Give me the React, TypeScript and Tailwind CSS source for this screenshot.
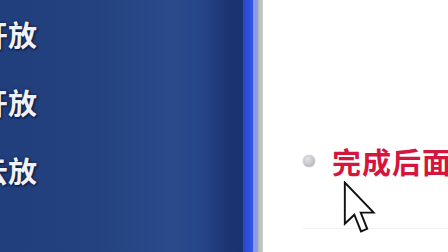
import React from 'react';

const rows = [
  { pre: '开', ch: '放' },
  { pre: '开', ch: '放' },
  { pre: '云', ch: '放' },
];

function Cursor() {
  // enlarged arrow pointer
  return (
    <svg width="34" height="54" viewBox="0 0 13 21" className="absolute left-[343px] top-[181px]">
      <path
        d="M0.6 0.6 L0.6 16.6 L4.3 13.1 L6.9 19.6 L9.3 18.6 L6.8 12.3 L11.8 12.3 Z"
        fill="#ffffff"
        stroke="#111111"
        strokeWidth="0.75"
        strokeLinejoin="miter"
      />
    </svg>
  );
}

export default function App() {
  return (
    <div className="relative flex h-[252px] w-[448px] overflow-hidden bg-white [font-family:'Noto_Sans_CJK_SC',sans-serif]">
      {/* blue side panel */}
      <div className="flex w-[243px] shrink-0 flex-col bg-[linear-gradient(to_right,#213e7d_0%,#24427f_40%,#2a4a8b_70%,#26468a_82%,#1c3472_94%,#1b3170_100%)] pt-[12px]">
        {rows.map((r, i) => (
          <div
            key={i}
            className="ml-[-21px] h-[68px] text-[29px] font-bold leading-[44px] text-[#eef1f8] [text-shadow:1px_1px_2px_#0b1535,0_0_3px_#0b1a45]"
          >
            {r.pre}
            {r.ch}
          </div>
        ))}
      </div>
      {/* window edge */}
      <div className="w-[10px] shrink-0 bg-[linear-gradient(to_right,#2846c8,#3457ec)]" />
      <div className="w-[5px] shrink-0 bg-[#8f9ce2]" />
      <div className="w-[5px] shrink-0 bg-[linear-gradient(to_right,#b0b8bc,#c8d0c8)]" />
      {/* white content */}
      <div className="flex flex-1 flex-col pl-[40px] pt-[146px]">
        <div className="flex items-center whitespace-nowrap">
          <span className="mr-[17px] h-[12px] w-[12px] shrink-0 rounded-full bg-[radial-gradient(circle_at_40%_35%,#e4e4e8,#a8a8b0)] shadow-[0_0_1px_#888]" />
          <span className="text-[29px] font-bold leading-[30px] tracking-[1px] text-[#d4163e]">完成后面</span>
        </div>
        <div className="mt-[52px] h-px w-full bg-[#f2f2f2]" />
      </div>
      <Cursor />
    </div>
  );
}
